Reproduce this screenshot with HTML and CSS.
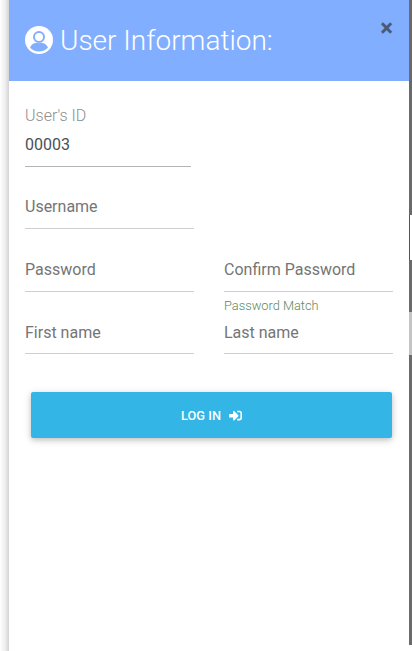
FILE: index.html
```html
<!doctype html>
<html lang="en">
  <head>
    <meta charset="UTF-8" />
    <meta name="viewport" content="width=device-width, initial-scale=1.0" />
    <title>User Information</title>
    <link rel="stylesheet" href="styles.css">
  </head>
  <body>
    <div class="gutter"></div>

    <div class="modal">
      <div class="modal-header">
        <h1 class="modal-title">
          <svg class="title-icon" viewBox="0 0 28 28">
            <circle cx="14" cy="14" r="14" fill="#fff"/>
            <circle cx="14" cy="11" r="5" fill="#fff" stroke="#82aeff" stroke-width="2"/>
            <path fill="#82aeff" d="M5 21.400c1.300-2.800 3.900-4.500 6.600-4.700 1.500.6 3.300.6 4.800 0 2.700.2 5.300 1.900 6.600 4.700-2.100 2.500-5.300 4-9 4s-6.900-1.500-9-4z"/>
          </svg>
          User Information:
        </h1>
        <span class="close">&times;</span>
      </div>

      <div class="modal-body">
        <div class="id-field">
          <label class="id-label">User's ID</label>
          <div class="id-value">00003</div>
        </div>

        <div class="form-row row-first">
          <div class="field"><label>Username</label></div>
        </div>

        <div class="form-row">
          <div class="field"><label>Password</label></div>
          <div class="field">
            <label>Confirm Password</label>
            <div class="hint">Password Match</div>
          </div>
        </div>

        <div class="form-row row-last">
          <div class="field"><label>First name</label></div>
          <div class="field"><label>Last name</label></div>
        </div>

        <button class="btn-login">
          Log in
          <svg class="btn-icon" viewBox="0 0 512 512">
            <path fill="#fff" d="M416 448h-84c-6.6 0-12-5.4-12-12v-40c0-6.6 5.4-12 12-12h84c17.7 0 32-14.3 32-32V160c0-17.7-14.3-32-32-32h-84c-6.6 0-12-5.4-12-12V76c0-6.6 5.4-12 12-12h84c53 0 96 43 96 96v192c0 53-43 96-96 96zm-47-201L201 79c-15-15-41-4.5-41 17v96H24c-13.3 0-24 10.7-24 24v96c0 13.3 10.7 24 24 24h136v96c0 21.5 26 32 41 17l168-168c9.3-9.4 9.3-24.6 0-34z"/>
          </svg>
        </button>
      </div>
    </div>

    <div class="edge">
      <div class="edge-dark edge-top"></div>
      <div class="edge-white"></div>
      <div class="edge-dark edge-mid"></div>
      <div class="edge-light"></div>
      <div class="edge-dark edge-bottom"></div>
    </div>
  </body>
</html>
```

FILE: styles.css
```css
html,
body {
  height: 100%;
}

body {
  display: flex;
  margin: 0;
  overflow: hidden;
  background-color: #fff;
  font-family: Roboto, "Liberation Sans", sans-serif;
}

.gutter {
  width: 9px;
  background: linear-gradient(to right, #fff, #ececec 60%, #d4d4d4);
}

.modal {
  width: 400px;
  background-color: #fff;
}

.modal-header {
  display: flex;
  justify-content: space-between;
  height: 81px;
  padding: 16px 16px 0 16px;
  box-sizing: border-box;
  background-color: #82aeff;
}

.modal-title {
  display: flex;
  align-items: center;
  gap: 7px;
  height: 48px;
  margin: 0;
  color: #fff;
  font-size: 28px;
  font-weight: 300;
}

.title-icon {
  width: 28px;
  height: 28px;
}

.close {
  color: #4a5a75;
  font-size: 24px;
  font-weight: 700;
  line-height: 24px;
}

.modal-body {
  padding: 23px 16px 0 16px;
}

.id-field {
  width: 166px;
  height: 63px;
  box-sizing: border-box;
  border-bottom: 1px solid #b5b5b5;
}

.id-label {
  display: block;
  height: 29px;
  color: #8e8e8e;
  font-size: 16px;
  font-weight: 300;
  line-height: 24px;
}

.id-value {
  color: #495057;
  font-size: 16px;
  line-height: 24px;
}

.form-row {
  display: flex;
  gap: 30px;
  margin-top: 25px;
}

.row-first {
  margin-top: 24px;
}

.field {
  width: 169px;
  height: 37px;
  border-bottom: 1px solid #cfcfcf;
}

.row-last .field {
  height: 36px;
}

.field label {
  display: block;
  margin-top: 4px;
  color: #757575;
  font-size: 16px;
  line-height: 24px;
}

.hint {
  height: 0;
  margin-top: 16px;
  color: #5a8a5f;
  font-size: 12.8px;
  font-weight: 300;
  line-height: 15px;
}

.btn-login {
  display: flex;
  align-items: center;
  justify-content: center;
  gap: 8px;
  width: 361px;
  height: 46px;
  margin: 38px 0 0 6px;
  padding: 0;
  border: none;
  border-radius: 2px;
  background-color: #33b5e5;
  box-shadow: 0 2px 5px rgba(0, 0, 0, 0.16), 0 2px 10px rgba(0, 0, 0, 0.12);
  color: #fff;
  font-family: inherit;
  font-size: 12.8px;
  font-weight: 500;
  text-transform: uppercase;
}

.btn-icon {
  width: 13px;
  height: 13px;
}

/* window behind the dialog, showing at the right */
.edge {
  display: flex;
  flex-direction: column;
  flex: 1;
}

.edge-dark {
  background-color: #6a6a6a;
}

.edge-top {
  height: 215px;
}

.edge-white {
  height: 45px;
  border-left: 1px solid #555;
  background-color: #fff;
}

.edge-mid {
  height: 52px;
}

.edge-light {
  height: 43px;
  background-color: #c4c4c4;
}

.edge-bottom {
  flex: 1;
  margin-bottom: 6px;
}
```
